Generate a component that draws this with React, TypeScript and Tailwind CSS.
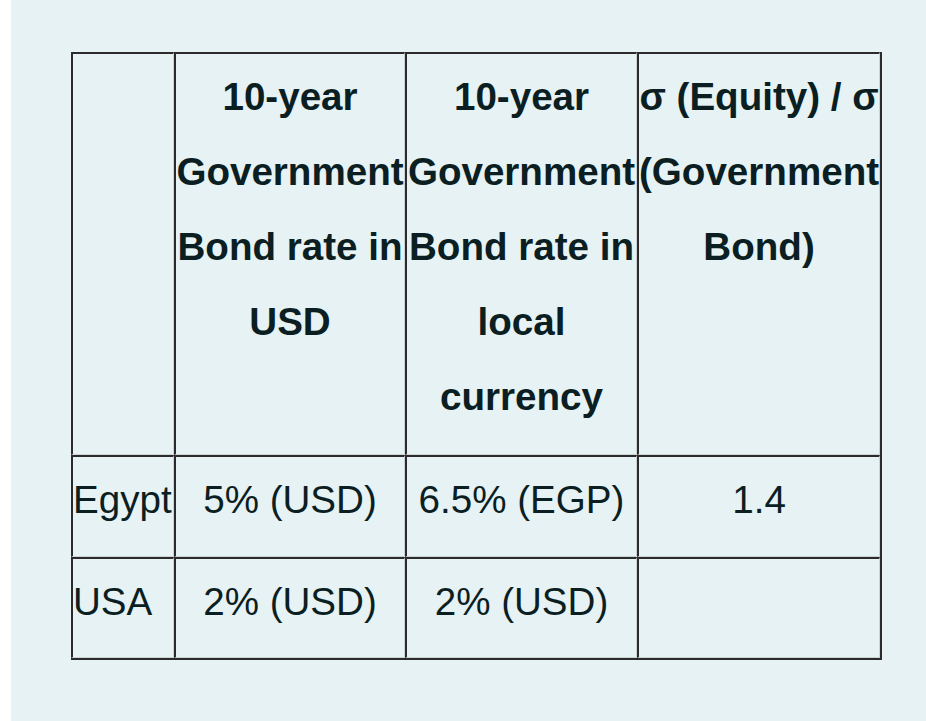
const ROWS = [
  { country: 'Egypt', usd: '5% (USD)', local: '6.5% (EGP)', ratio: '1.4' },
  { country: 'USA', usd: '2% (USD)', local: '2% (USD)', ratio: '' },
];

const cell = 'border-l-2 border-t-2 border-l-[#2b2b2b] border-t-[#2b2b2b] border-r border-b border-r-[#cdd3d4] border-b-[#cdd3d4] p-0 pt-[5px] align-top';

export default function App() {
  return (
    <div className="flex min-h-[721px] bg-white" style={{ fontFamily: '"Liberation Sans", Arial, sans-serif' }}>
      <div className="w-[11px] shrink-0 bg-white" />
      <main className="flex-1 bg-[#e6f2f4] pl-[60px] pt-[52px] text-[#0b1e22]">
        <table className="table-fixed border-separate border-spacing-0 border-r-2 border-b-2 border-[#2b2b2b] text-[38.6px] leading-[75px]">
          <colgroup>
            <col className="w-[103px]" />
            <col className="w-[231px]" />
            <col className="w-[232px]" />
            <col className="w-[241px]" />
          </colgroup>
          <thead>
            <tr className="h-[403px]">
              <th className={cell}></th>
              <th className={`${cell} font-bold text-center`}>10-year Government Bond rate in USD</th>
              <th className={`${cell} font-bold text-center`}>10-year Government Bond rate in local currency</th>
              <th className={`${cell} font-bold text-center`}>σ (Equity) / σ (Government Bond)</th>
            </tr>
          </thead>
          <tbody>
            {ROWS.map((r, i) => (
              <tr key={r.country} className={i === 0 ? 'h-[102px]' : 'h-[101px]'}>
                <td className={`${cell} text-left`}>{r.country}</td>
                <td className={`${cell} text-center`}>{r.usd}</td>
                <td className={`${cell} text-center`}>{r.local}</td>
                <td className={`${cell} text-center`}>{r.ratio}</td>
              </tr>
            ))}
          </tbody>
        </table>
      </main>
    </div>
  );
}
